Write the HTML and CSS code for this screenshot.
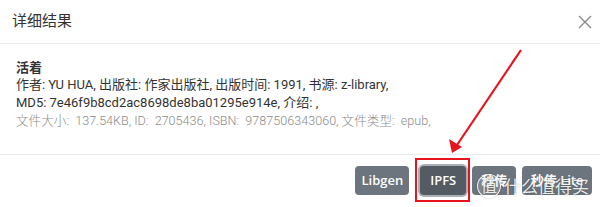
FILE: index.html
```html
<!DOCTYPE html>
<html lang="zh-CN">
<head>
<meta charset="utf-8">
<title>详细结果</title>
<link rel="stylesheet" href="styles.css">
</head>
<body>
<div class="modal">
  <div class="modal-header">
    <h5 class="modal-title">详细结果</h5>
    <button class="close" aria-label="Close">
      <svg width="14" height="14" viewBox="0 0 14 14"><path d="M1 1L13 13M13 1L1 13" stroke="#8a8a8a" stroke-width="1.4" fill="none"/></svg>
    </button>
  </div>
  <div class="modal-body">
    <div class="book-title">活着</div>
    <div class="line">作者: YU HUA, 出版社: 作家出版社, 出版时间: 1991, 书源: z-library,</div>
    <div class="line">MD5: 7e46f9b8cd2ac8698de8ba01295e914e, 介绍: ,</div>
    <div class="line muted">文件大小:&nbsp; 137.54KB, ID:&nbsp; 2705436, ISBN:&nbsp; 9787506343060, 文件类型:&nbsp; epub,</div>
  </div>
  <div class="modal-footer">
    <button class="btn btn-libgen">Libgen</button>
    <span class="highlight"><button class="btn btn-focus">IPFS</button></span>
    <button class="btn">秒传</button>
    <button class="btn btn-lite">秒传 Lite</button>
  </div>
  <svg class="arrow" width="600" height="207" viewBox="0 0 600 207">
    <line x1="521" y1="50" x2="457" y2="145" stroke="#e8141b" stroke-width="2.2"/>
    <polygon points="452,153 449,139 462,147" fill="#e8141b"/>
  </svg>
  <div class="watermark"><span class="wm-logo">值</span><span class="wm-text">什么值得买</span></div>
</div>
</body>
</html>
```
FILE: styles.css
```css
* { box-sizing: border-box; }
html, body { margin: 0; padding: 0; background: #fff; }
body {
  font-family: Roboto, "Noto Sans CJK SC", sans-serif;
  color: #333;
  width: 600px;
  height: 207px;
  overflow: hidden;
}
.modal { position: relative; width: 600px; height: 207px; background: #fff; overflow: hidden; }
.modal-header {
  height: 44px;
  display: flex;
  align-items: center;
  justify-content: space-between;
  padding: 0 8px 0 12px;
  border-bottom: 1px solid #e9ecef;
}
.modal-title {
  margin: 0;
  font-family: "Noto Sans CJK SC", sans-serif;
  font-weight: 400;
  font-size: 15px;
  color: #333;
  position: relative;
  top: -2px;
}
.close {
  border: 0;
  background: none;
  padding: 0;
  width: 14px;
  height: 14px;
  display: flex;
}
.modal-body {
  padding: 14px 16px 24px 16px;
  font-size: 13px;
  line-height: 18px;
  height: 111px;
  border-bottom: 1px solid #e9ecef;
}
.book-title { font-weight: 700; font-family: "Noto Sans CJK SC", sans-serif; }
.line { white-space: nowrap; }
.muted { color: #8c8c8c; font-size: 12.6px; font-weight: 300; }
.modal-footer {
  display: flex;
  justify-content: flex-end;
  align-items: center;
  gap: 6px;
  padding: 11px 8px 0 0;
}
.btn {
  height: 29px;
  padding: 0 9px;
  border: 0;
  border-radius: 4px;
  background: #6c757d;
  color: #fff;
  font-family: "Open Sans", "Noto Sans CJK SC", sans-serif;
  font-size: 13px;
  font-weight: 600;
  line-height: 29px;
}
.btn-libgen { margin-right: 5px; padding: 0 6px; }
.btn-lite { padding: 0 8.5px; }
.btn-focus {
  background: #545b62;
  box-shadow: 0 0 0 2px #a9b0b6;
  display: block;
  padding: 0 10px;
}
.highlight { position: relative; display: block; }
.highlight::after {
  content: "";
  position: absolute;
  left: -5px; right: -4px; top: -8px; bottom: -7px;
  border: 2.5px solid #e8141b;
}
.arrow { position: absolute; left: 0; top: 0; pointer-events: none; }
.watermark {
  position: absolute;
  left: 477px;
  top: 174px;
  display: flex;
  align-items: center;
  gap: 3px;
  color: rgba(255,255,255,0.9);
  font-family: "Noto Sans CJK SC", sans-serif;
  text-shadow: 0 0 2px rgba(0,0,0,0.35);
}
.wm-logo {
  width: 24px; height: 24px;
  border-radius: 50%;
  border: 1.5px solid rgba(255,255,255,0.9);
  background: rgba(255,255,255,0.15);
  font-size: 16px; line-height: 21px; text-align: center;
  box-shadow: 0 0 2px rgba(0,0,0,0.3);
}
.wm-text { font-size: 17px; line-height: 24px; }
```
